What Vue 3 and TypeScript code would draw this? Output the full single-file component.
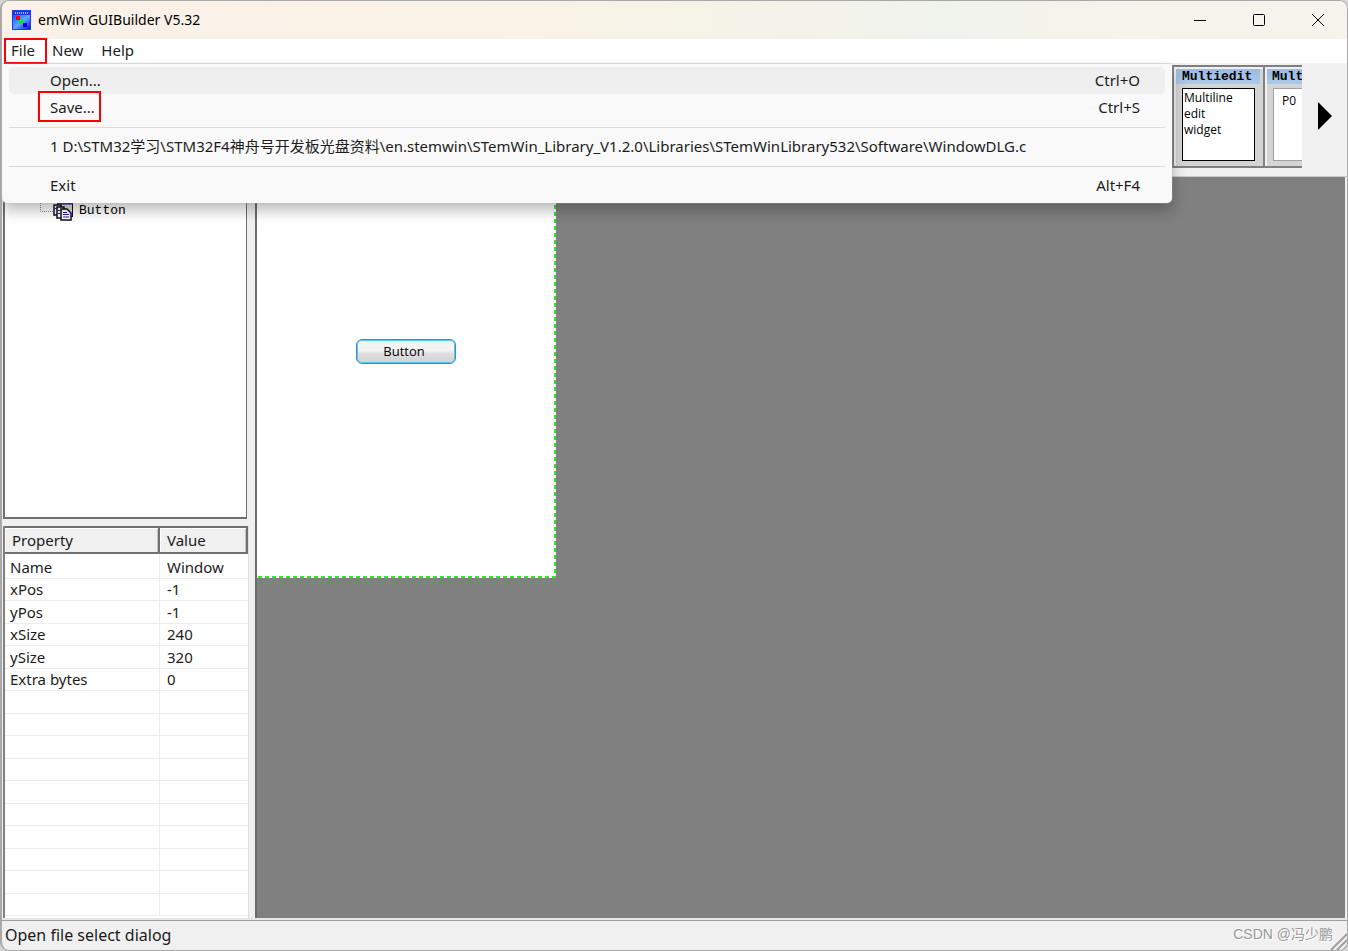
<script setup lang="ts">
interface MenuEntry {
  label: string
  shortcut?: string
  active?: boolean
  marked?: boolean
}

const menuGroups: MenuEntry[][] = [
  [
    { label: 'Open...', shortcut: 'Ctrl+O', active: true },
    { label: 'Save...', shortcut: 'Ctrl+S', marked: true },
  ],
  [
    {
      label:
        '1 D:\\STM32学习\\STM32F4神舟号开发板光盘资料\\en.stemwin\\STemWin_Library_V1.2.0\\Libraries\\STemWinLibrary532\\Software\\WindowDLG.c',
    },
  ],
  [{ label: 'Exit', shortcut: 'Alt+F4' }],
]

const properties: [string, string][] = [
  ['Name', 'Window'],
  ['xPos', '-1'],
  ['yPos', '-1'],
  ['xSize', '240'],
  ['ySize', '320'],
  ['Extra bytes', '0'],
]
const emptyRows = 10
</script>

<template>
  <div class="window">
    <header class="titlebar">
      <svg class="app-icon" width="19" height="20" viewBox="0 0 19 20" aria-hidden="true">
        <defs>
          <linearGradient id="app-blue" x1="0" y1="0" x2="1" y2="1">
            <stop offset="0" stop-color="#1b50ff" />
            <stop offset="0.5" stop-color="#5fa8ff" />
            <stop offset="1" stop-color="#1010e0" />
          </linearGradient>
        </defs>
        <rect width="19" height="20" fill="#1838f0" />
        <rect x="1" y="5" width="17" height="14" fill="url(#app-blue)" />
        <path d="M3 3h13" stroke="#8cc0ff" stroke-width="2" stroke-dasharray="1 1" />
        <rect x="4" y="6" width="4" height="4" fill="#f00" />
        <rect x="7" y="10" width="4" height="4" fill="#0e2" />
        <rect x="11" y="13" width="4" height="4" fill="#0000c0" />
      </svg>
      <span class="title">emWin GUIBuilder V5.32</span>
      <button class="caption" type="button" aria-label="Minimize">
        <svg width="14" height="14" viewBox="0 0 14 14"><path d="M1 7.5h12" /></svg>
      </button>
      <button class="caption" type="button" aria-label="Maximize">
        <svg width="14" height="14" viewBox="0 0 14 14"><rect x="1.5" y="1.5" width="11" height="11" rx="1" /></svg>
      </button>
      <button class="caption" type="button" aria-label="Close">
        <svg width="14" height="14" viewBox="0 0 14 14"><path d="M1 1l12 12M13 1L1 13" /></svg>
      </button>
    </header>

    <nav class="menubar">
      <button class="menu-title marked" type="button" aria-expanded="true">File</button>
      <button class="menu-title" type="button">New</button>
      <button class="menu-title" type="button">Help</button>
      <div class="dropdown" role="menu">
        <div v-for="(group, g) in menuGroups" :key="g" class="group">
          <button
            v-for="item in group"
            :key="item.label"
            class="item"
            :class="{ active: item.active }"
            type="button"
            role="menuitem"
          >
            <span class="item-label" :class="{ marked: item.marked }">{{ item.label }}</span>
            <span>{{ item.shortcut }}</span>
          </button>
        </div>
      </div>
    </nav>

    <div class="toolbar">
      <div class="strip">
        <button class="widget" type="button">
          <span class="widget-name">Multiedit</span>
          <span class="widget-box dark">Multiline edit widget</span>
        </button>
        <button class="widget cut" type="button">
          <span class="widget-name">Mult</span>
          <span class="widget-box light">P0</span>
        </button>
      </div>
      <button class="scroll" type="button" aria-label="Scroll right">
        <svg width="14" height="28" viewBox="0 0 14 28"><path d="M0 0L14 14L0 28Z" fill="#000" /></svg>
      </button>
    </div>

    <main class="workspace">
      <aside class="side">
        <section class="tree">
          <div class="node">
            <svg width="34" height="20" viewBox="0 0 34 20" aria-hidden="true">
              <path d="M.5 0V10.500H13" fill="none" stroke="#888" stroke-dasharray="1 1" />
              <rect x="17.500" y="2.500" width="15" height="13" fill="#dcdcdc" stroke="#111" />
              <path d="M17 2.500h16" stroke="#101080" stroke-width="2" />
              <path d="M14 4h7v10h-7z" fill="#fff" stroke="#111" stroke-width="1.500" />
              <path d="M17 6h7v11h-7z" fill="#fff" stroke="#111" stroke-width="1.500" />
              <path d="M21 8h6l4 4v7H21z" fill="#fff" stroke="#111" stroke-width="1.500" />
              <path d="M15 7.500h2M18 9.500h2M18 12.500h2M23 11.500h4M23 13.500h6M23 16h6" stroke="#2020a0" />
            </svg>
            <span>Button</span>
          </div>
        </section>
        <section class="props">
          <table>
            <thead>
              <tr><th scope="col">Property</th><th scope="col">Value</th></tr>
            </thead>
            <tbody>
              <tr v-for="[name, value] in properties" :key="name">
                <td>{{ name }}</td><td>{{ value }}</td>
              </tr>
              <tr v-for="n in emptyRows" :key="n"><td></td><td></td></tr>
            </tbody>
          </table>
        </section>
      </aside>
      <section class="canvas">
        <div class="form">
          <button class="form-button" type="button">Button</button>
          <svg class="selection" viewBox="0 0 299 401" aria-hidden="true">
            <path d="M298 0V400H0" fill="none" stroke="#2be62b" stroke-width="2" stroke-dasharray="4 3" />
          </svg>
        </div>
      </section>
    </main>

    <footer class="statusbar">
      <span>Open file select dialog</span>
      <span class="credit">CSDN @冯少鹏</span>
      <svg class="grip" width="18" height="18" viewBox="0 0 18 18" aria-hidden="true">
        <path d="M2 18L18 2M8 18L18 8M14 18l4-4" stroke="#a0a0a0" stroke-width="2" />
      </svg>
    </footer>
  </div>
</template>

<style>
body {
  margin: 0;
  background: #d4d4d4;
}
</style>

<style scoped>
* {
  box-sizing: border-box;
}
.window {
  display: flex;
  flex-direction: column;
  min-height: 100vh;
  border: 1px solid #a8a8a8;
  border-left-width: 2px;
  border-radius: 9px;
  overflow: hidden;
  background: #f0f0f0;
  color: #1c1c1c;
  font: 15px/22px "Noto Sans", "Noto Sans CJK SC", sans-serif;
}
button {
  margin: 0;
  padding: 0;
  border: 0;
  background: none;
  color: inherit;
  font: inherit;
  text-align: left;
}
.titlebar {
  display: flex;
  align-items: center;
  height: 38px;
  padding-left: 10px;
  background: linear-gradient(90deg, #faf1e9, #f9f2e6 40%, #f0f3ec 70%, #f6f3eb 85%, #f6f2ec);
  color: #000;
}
.title {
  flex: 1;
  margin-left: 7px;
  font-size: 14px;
}
.caption {
  display: flex;
  align-items: center;
  justify-content: center;
  width: 59px;
  height: 38px;
}
.caption svg {
  fill: none;
  stroke: #000;
}
.menubar {
  position: relative;
  z-index: 2;
  display: flex;
  gap: 6px;
  height: 24px;
  padding-left: 3px;
  background: #fff;
}
.menu-title {
  height: 24px;
  padding: 0 6px 2px;
}
.marked {
  position: relative;
}
.marked::after {
  content: "";
  position: absolute;
  inset: -1px -7px -1px -1px;
  border: 2px solid #f00;
}
.menu-title.marked {
  width: 35px;
}
.dropdown {
  position: absolute;
  top: 25px;
  left: 0;
  width: 1170px;
  padding: 3px 7px 4px;
  border-radius: 0 0 5px 5px;
  background: #f9f9f9;
  box-shadow: 0 0 2px #aaa, 1px 8px 14px rgba(0, 0, 0, 0.25);
}
.group + .group {
  margin-top: 6px;
  padding-top: 5px;
  border-top: 1px solid #dcdcdc;
}
.item {
  display: flex;
  justify-content: space-between;
  width: 100%;
  height: 27px;
  padding: 0 25px 1px 41px;
  border-radius: 5px;
  line-height: 26px;
}
.item.active {
  background: #efefef;
}
.item-label.marked::after {
  inset: -3px -6px -2px -12px;
}
.toolbar {
  display: flex;
  height: 114px;
  border-bottom: 1px solid #c8c8c8;
}
.strip {
  display: flex;
  flex: 1;
  justify-content: flex-end;
  height: 103px;
  margin-top: 2px;
}
.widget {
  display: flex;
  flex-direction: column;
  width: 91px;
  padding: 2px 3px 0 2px;
  border: solid #808080;
  border-width: 2px 0 2px 2px;
  background: #d4d4d4;
  box-shadow: inset 2px 2px 0 #f0f0f0;
  color: #000;
}
.widget.cut {
  width: 39px;
  padding-right: 0;
  overflow: hidden;
}
.widget-name {
  flex: none;
  align-self: stretch;
  height: 15px;
  padding-left: 6px;
  background: linear-gradient(#9dbbe0, #abc9e8);
  font: bold 13px/15px "Liberation Mono", monospace;
}
.widget.cut .widget-name {
  padding-left: 5px;
}
.widget-box {
  flex: none;
  width: 73px;
  height: 73px;
  margin: 4px 0 0 6px;
  padding: 1px 12px 0 1px;
  border: 1px solid #000;
  background: #fff;
  font: 12px/16px "Open Sans", sans-serif;
}
.widget-box.light {
  padding: 4px 0 0 8px;
  border-color: #a0a0a0;
}
.scroll {
  display: flex;
  align-items: flex-start;
  width: 45px;
  padding: 39px 0 0 16px;
}
.workspace {
  display: flex;
  flex: 1;
  padding-right: 2px;
}
.side {
  display: flex;
  flex-direction: column;
  width: 246px;
  margin: 0 6px 0 1px;
}
.tree {
  flex: 1;
  margin-right: 2px;
  border: solid #707070;
  border-width: 0 1px 2px 2px;
  background: #fff;
}
.node {
  display: flex;
  align-items: center;
  gap: 5px;
  margin: 24px 0 0 35px;
  color: #000;
  font: 13px/20px "Liberation Mono", monospace;
}
.props {
  margin-top: 7px;
  padding-bottom: 2px;
  border-left: 2px solid #808080;
  border-right: 1px solid #e0e0e0;
  background: #fff;
}
table {
  width: 100%;
  border-collapse: separate;
  border-spacing: 0;
  table-layout: fixed;
}
th {
  height: 28px;
  padding: 0 7px;
  border: solid #707070;
  border-width: 2px 2px 2px 0;
  background: #f0f0f0;
  box-shadow: inset 1px 1px 0 #fff, inset -1px 0 0 #c0c0c0;
  font-weight: normal;
  text-align: left;
}
th:first-child {
  width: 155px;
}
td {
  height: 23px;
  padding: 0 7px;
  border: solid #ececec;
  border-width: 0 0 1px;
  line-height: 21px;
}
tr:nth-child(even) td {
  height: 22px;
}
td:first-child {
  padding: 0 5px;
  border-right-width: 1px;
}
tbody tr:first-child td {
  height: 25px;
  padding-top: 2px;
}
.canvas {
  flex: 1;
  border-left: 2px solid #6c6c6c;
  background: #808080;
}
.form {
  position: relative;
  width: 299px;
  height: 401px;
  background: #fff;
}
.selection {
  position: absolute;
  inset: 0;
  width: 100%;
  height: 100%;
}
.form-button {
  position: absolute;
  top: 162px;
  left: 99px;
  width: 100px;
  height: 25px;
  padding: 0 4px 1px 0;
  border: 1px solid #3a8fc4;
  border-radius: 6px;
  background: linear-gradient(#f4f4f4 45%, #dedede 60%, #d2d2d2);
  box-shadow: inset 0 0 0 1px #4ccdf0;
  color: #000;
  font: 13px/20px "Open Sans", sans-serif;
  text-align: center;
}
.statusbar {
  position: relative;
  display: flex;
  align-items: center;
  justify-content: space-between;
  height: 32px;
  padding: 0 14px 1px 3px;
  border-top: 2px solid #e8e8e8;
  box-shadow: inset 0 1px 0 #a0a0a0;
  font-size: 16px;
}
.credit {
  padding-bottom: 2px;
  color: #999;
  font: 14px/20px "Liberation Sans", "Noto Sans CJK SC", sans-serif;
  text-shadow: 1px 1px 0 #fff;
}
.grip {
  position: absolute;
  right: 0;
  bottom: 0;
}
</style>
